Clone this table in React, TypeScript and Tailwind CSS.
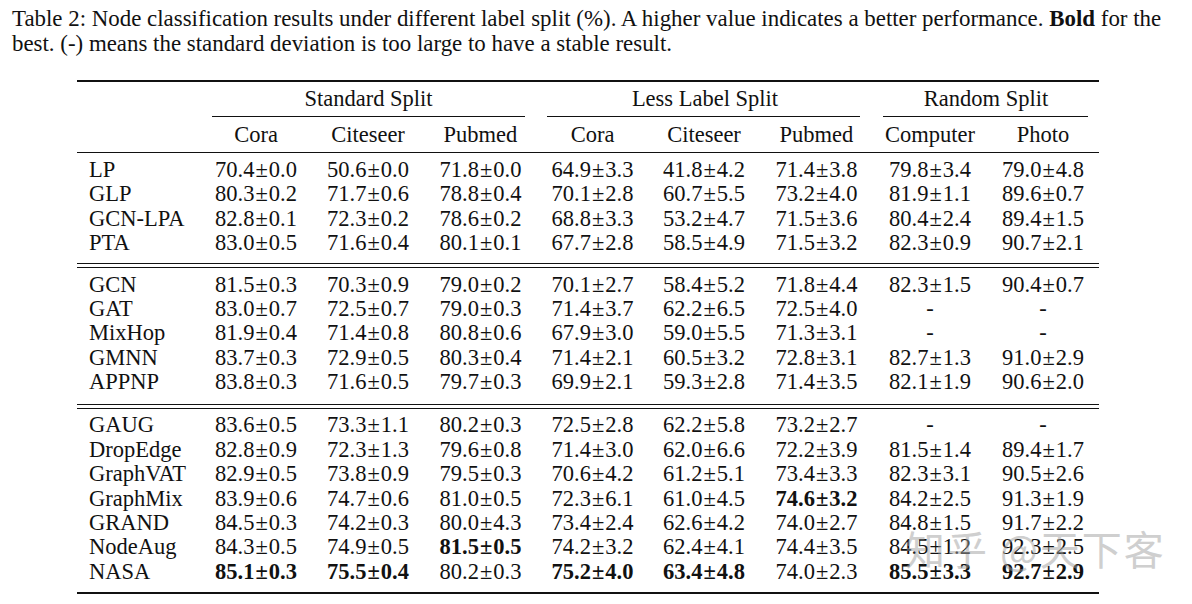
import React from "react";

type Row = [string, string[]];

// "*" marks the best result in a column (bold)
const groups: Row[][] = [
  [
    ["LP", ["70.4±0.0", "50.6±0.0", "71.8±0.0", "64.9±3.3", "41.8±4.2", "71.4±3.8", "79.8±3.4", "79.0±4.8"]],
    ["GLP", ["80.3±0.2", "71.7±0.6", "78.8±0.4", "70.1±2.8", "60.7±5.5", "73.2±4.0", "81.9±1.1", "89.6±0.7"]],
    ["GCN-LPA", ["82.8±0.1", "72.3±0.2", "78.6±0.2", "68.8±3.3", "53.2±4.7", "71.5±3.6", "80.4±2.4", "89.4±1.5"]],
    ["PTA", ["83.0±0.5", "71.6±0.4", "80.1±0.1", "67.7±2.8", "58.5±4.9", "71.5±3.2", "82.3±0.9", "90.7±2.1"]],
  ],
  [
    ["GCN", ["81.5±0.3", "70.3±0.9", "79.0±0.2", "70.1±2.7", "58.4±5.2", "71.8±4.4", "82.3±1.5", "90.4±0.7"]],
    ["GAT", ["83.0±0.7", "72.5±0.7", "79.0±0.3", "71.4±3.7", "62.2±6.5", "72.5±4.0", "-", "-"]],
    ["MixHop", ["81.9±0.4", "71.4±0.8", "80.8±0.6", "67.9±3.0", "59.0±5.5", "71.3±3.1", "-", "-"]],
    ["GMNN", ["83.7±0.3", "72.9±0.5", "80.3±0.4", "71.4±2.1", "60.5±3.2", "72.8±3.1", "82.7±1.3", "91.0±2.9"]],
    ["APPNP", ["83.8±0.3", "71.6±0.5", "79.7±0.3", "69.9±2.1", "59.3±2.8", "71.4±3.5", "82.1±1.9", "90.6±2.0"]],
  ],
  [
    ["GAUG", ["83.6±0.5", "73.3±1.1", "80.2±0.3", "72.5±2.8", "62.2±5.8", "73.2±2.7", "-", "-"]],
    ["DropEdge", ["82.8±0.9", "72.3±1.3", "79.6±0.8", "71.4±3.0", "62.0±6.6", "72.2±3.9", "81.5±1.4", "89.4±1.7"]],
    ["GraphVAT", ["82.9±0.5", "73.8±0.9", "79.5±0.3", "70.6±4.2", "61.2±5.1", "73.4±3.3", "82.3±3.1", "90.5±2.6"]],
    ["GraphMix", ["83.9±0.6", "74.7±0.6", "81.0±0.5", "72.3±6.1", "61.0±4.5", "*74.6±3.2", "84.2±2.5", "91.3±1.9"]],
    ["GRAND", ["84.5±0.3", "74.2±0.3", "80.0±4.3", "73.4±2.4", "62.6±4.2", "74.0±2.7", "84.8±1.5", "91.7±2.2"]],
    ["NodeAug", ["84.3±0.5", "74.9±0.5", "*81.5±0.5", "74.2±3.2", "62.4±4.1", "74.4±3.5", "84.5±1.2", "92.3±2.5"]],
    ["NASA", ["*85.1±0.3", "*75.5±0.4", "80.2±0.3", "*75.2±4.0", "*63.4±4.8", "74.0±2.3", "*85.5±3.3", "*92.7±2.9"]],
  ],
];

const cols = "grid grid-cols-[123px_112px_112px_113px_111px_112px_113px_114px_112px]";

function Cell({ v }: { v: string }) {
  const bold = v.startsWith("*");
  const s = bold ? v.slice(1) : v;
  const [a, b] = s.split("±");
  return (
    <div className={`text-center whitespace-nowrap ${bold ? "font-bold" : ""}`}>
      {b === undefined ? (
        a
      ) : (
        <>
          {a}
          <span className="mx-[1px]">±</span>
          {b}
        </>
      )}
    </div>
  );
}

export default function App() {
  return (
    <div className="relative w-[1192px] h-[604px] bg-white text-[#111] overflow-hidden" style={{ fontFamily: '"Liberation Serif", "Times New Roman", serif' }}>
      <p className="pl-[12px] pt-[6px] text-[22.9px] leading-[25px] whitespace-nowrap">
        Table 2: Node classification results under different label split (%). A higher value indicates a better performance. <b>Bold</b> for the
        <br />
        best. (-) means the standard deviation is too large to have a stable result.
      </p>

      <div className="absolute left-[77px] top-[80px] w-[1022px] text-[22.5px]">
        <div className="h-[2px] bg-[#111]" />
        <div className={`${cols} h-[34px] items-center`}>
          <div />
          <div className="col-span-3 text-center">Standard Split</div>
          <div className="col-span-3 text-center">Less Label Split</div>
          <div className="col-span-2 text-center">Random Split</div>
        </div>
        <div className={`${cols} h-px`}>
          <div />
          <div className="col-span-3 mx-[12px] bg-[#111]" />
          <div className="col-span-3 ml-[10px] mr-[13px] bg-[#111]" />
          <div className="col-span-2 ml-[10px] mr-[11px] bg-[#111]" />
        </div>
        <div className={`${cols} h-[35px] items-center`}>
          <div />
          {["Cora", "Citeseer", "Pubmed", "Cora", "Citeseer", "Pubmed", "Computer", "Photo"].map((h, i) => (
            <div key={i} className="text-center">{h}</div>
          ))}
        </div>
        <div className="h-px bg-[#111]" />

        {groups.map((g, gi) => (
          <div key={gi}>
            {gi > 0 && <div className="h-[5px] border-y border-[#111]" />}
            <div className={gi === 1 ? "pt-[5px] pb-[9px]" : gi === 0 ? "pt-[5px] pb-[7px]" : "pt-[5px] pb-[8px]"}>
              {g.map(([name, vals]) => (
                <div key={name} className={`${cols} h-[24.4px] items-center leading-none`}>
                  <div className="pl-[12px]">{name}</div>
                  {vals.map((v, i) => (
                    <Cell key={i} v={v} />
                  ))}
                </div>
              ))}
            </div>
          </div>
        ))}
        <div className="h-[2px] bg-[#111]" />
      </div>

      <div
        className="absolute left-[905px] top-[528px] text-[40px] leading-none text-[#a0a0a0] opacity-50 tracking-[2px]"
        style={{ fontFamily: '"Noto Sans CJK SC", "Noto Sans", sans-serif' }}
      >
        知乎 @天下客
      </div>
    </div>
  );
}
